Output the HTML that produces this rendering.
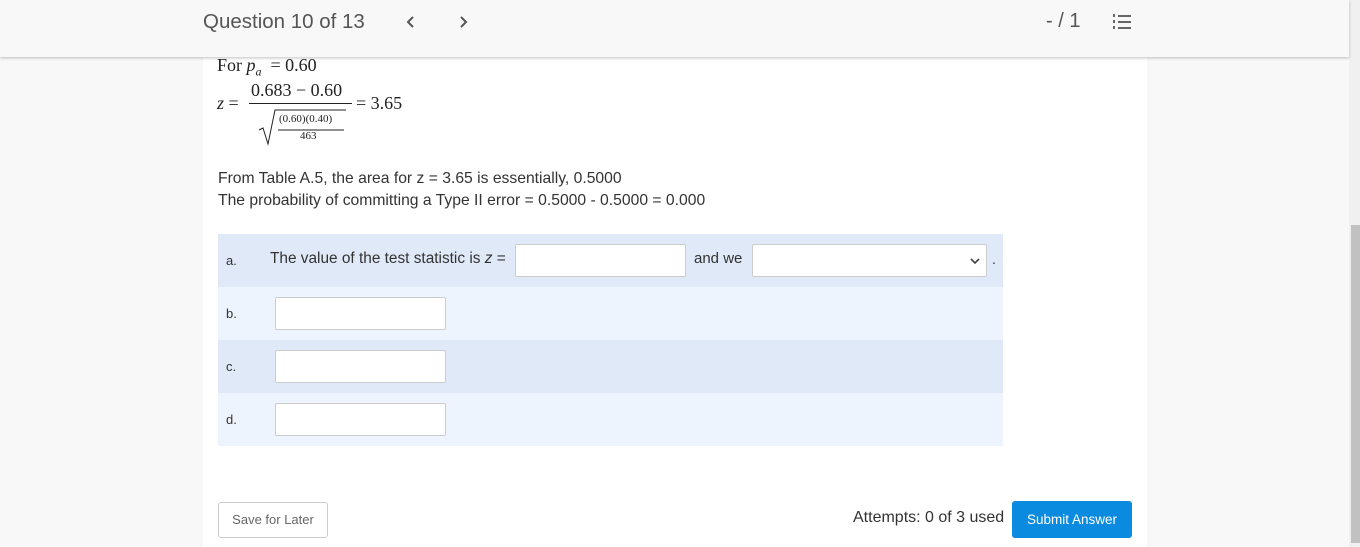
<!DOCTYPE html>
<html><head><style>
*{box-sizing:border-box;margin:0;padding:0}
body{width:1360px;height:547px;overflow:hidden;background:#f8f8f8;font-family:"Liberation Sans",sans-serif;color:#333;position:relative}
.hdr{position:absolute;left:0;top:0;width:1349px;height:57px;background:#f8f8f8;box-shadow:0 1px 3px rgba(0,0,0,.25);z-index:2}
.content{position:absolute;left:203px;top:0;width:944px;height:547px;background:#fff}
.sb{position:absolute;left:1349px;top:0;width:11px;height:547px;background:#f0f0f0}
.thumb{position:absolute;left:1351px;top:225px;width:9px;height:318px;background:#c1c1c1}
.t{position:absolute;white-space:nowrap}
.serif{font-family:"Liberation Serif",serif;color:#222}
.row{position:absolute;left:218px;width:785px;height:53px}
.in{position:absolute;height:33px;background:#fff;border:1px solid #ccc;border-radius:2px}
.lbl{position:absolute;left:8px;top:19px;font-size:13px;color:#333}
</style></head><body>
<div class="content"></div>
<div class="sb"></div><div class="thumb"></div>
<div class="hdr">
<div class="t" style="left:203px;top:10px;font-size:20.5px;color:#555">Question 10 of 13</div>
<svg style="position:absolute;left:406px;top:16px" width="10" height="12"><path d="M7 1 L2 6 L7 11" stroke="#555" stroke-width="2" fill="none"/></svg>
<svg style="position:absolute;left:459px;top:16px" width="10" height="12"><path d="M2 1 L7 6 L2 11" stroke="#555" stroke-width="2" fill="none"/></svg>
<div class="t" style="left:1046px;top:10px;font-size:20px;color:#555">- / 1</div>
<svg style="position:absolute;left:1112px;top:13px" width="22" height="18" viewBox="0 0 22 18">
<g fill="#666"><rect x="6" y="2" width="13" height="2"/><rect x="6" y="8" width="13" height="2"/><rect x="6" y="14" width="13" height="2"/>
<rect x="1" y="1" width="2" height="3"/><rect x="1" y="7" width="2" height="3"/><rect x="1" y="13" width="2" height="3"/></g></svg>
</div>
<div class="t serif" style="left:217px;top:55px;font-size:18px">For <i>p<sub style="font-size:12px">a</sub></i> &nbsp;= 0.60</div>
<div class="t serif" style="left:217px;top:93px;font-size:18px"><i>z</i> =</div>
<div class="t serif" style="left:251px;top:80px;font-size:18px">0.683 − 0.60</div>
<div style="position:absolute;left:249px;top:103px;width:103px;height:1px;background:#222"></div>
<div class="t serif" style="left:356px;top:93px;font-size:18px">= 3.65</div>
<svg style="position:absolute;left:258px;top:108px" width="90" height="38"><path d="M1 22 L5 20 L10 36 L17 2 L88 2" stroke="#222" fill="none" stroke-width="1"/><line x1="20" y1="22" x2="86" y2="22" stroke="#222"/></svg>
<div class="t serif" style="left:279px;top:113px;font-size:11px">(0.60)(0.40)</div>
<div class="t serif" style="left:300px;top:130px;font-size:11px">463</div>
<div class="t" style="left:218px;top:170px;font-size:15.7px;color:#333">From Table A.5, the area for z = 3.65 is essentially, 0.5000</div>
<div class="t" style="left:218px;top:192px;font-size:15.7px;color:#333">The probability of committing a Type II error = 0.5000 - 0.5000 = 0.000</div>
<div class="row" style="top:234px;background:#dfe9f8">
<div class="lbl">a.</div>
<div class="t" style="left:52px;top:16px;font-size:15.4px">The value of the test statistic is <i>z</i> =</div>
<div class="in" style="left:297px;top:10px;width:171px"></div>
<div class="t" style="left:476px;top:16px;font-size:15px">and we</div>
<div class="in" style="left:534px;top:10px;width:235px"><svg style="position:absolute;right:6px;top:12px" width="10" height="8"><path d="M1 2 L5 6 L9 2" stroke="#444" stroke-width="1.6" fill="none"/></svg></div>
<div class="t" style="left:774px;top:17px;font-size:14px">.</div>
</div>
<div class="row" style="top:287px;background:#eef4fd"><div class="lbl">b.</div><div class="in" style="left:57px;top:10px;width:171px"></div></div>
<div class="row" style="top:340px;background:#dfe9f8"><div class="lbl">c.</div><div class="in" style="left:57px;top:10px;width:171px"></div></div>
<div class="row" style="top:393px;background:#eef4fd"><div class="lbl">d.</div><div class="in" style="left:57px;top:10px;width:171px"></div></div>
<div style="position:absolute;left:218px;top:502px;width:110px;height:36px;border:1px solid #ccc;border-radius:3px;font-size:13px;color:#666;text-align:center;line-height:34px">Save for Later</div>
<div class="t" style="left:853px;top:509px;font-size:16px;color:#333">Attempts: 0 of 3 used</div>
<div style="position:absolute;left:1012px;top:501px;width:120px;height:37px;background:#0b8be0;border-radius:3px;color:#fff;font-size:13.5px;text-align:center;line-height:37px">Submit Answer</div>
</body></html>
